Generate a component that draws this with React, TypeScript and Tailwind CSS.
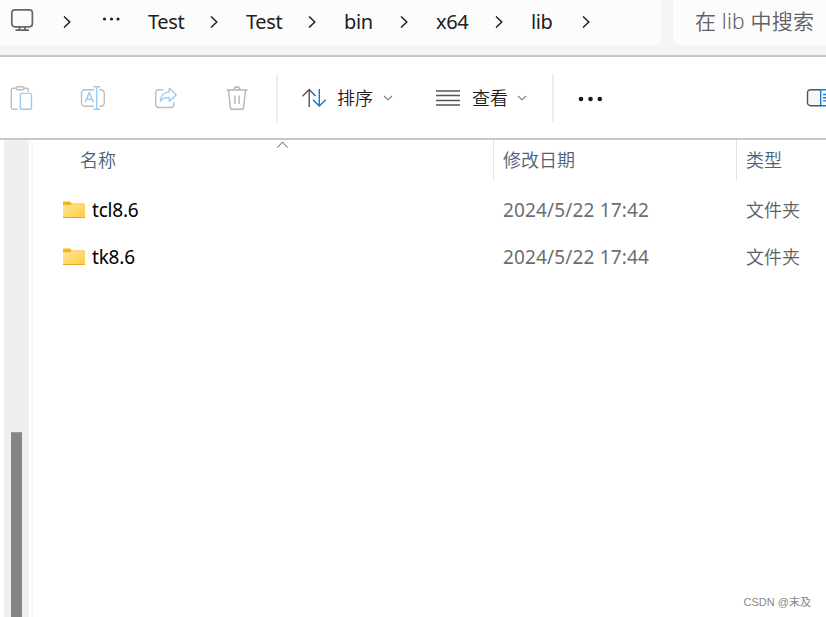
import type { ReactNode } from "react"
import { clsx } from "clsx"

type FileRow = { name: string; modified: string; type: string }

const files: FileRow[] = [
  { name: "tcl8.6", modified: "2024/5/22 17:42", type: "文件夹" },
  { name: "tk8.6", modified: "2024/5/22 17:44", type: "文件夹" },
]

const crumbs = [
  { label: "Test", className: "w-[98px]" },
  { label: "Test", className: "w-[98px]" },
  { label: "bin", className: "w-[92px]" },
  { label: "x64", className: "w-[95px]" },
  { label: "lib", className: "w-[87px]" },
]

function Chevron() {
  return (
    <svg width="8" height="12" viewBox="0 0 8 12" fill="none" stroke="#222" strokeWidth="1.5">
      <path d="M1 .5 6.8 6 1 11.5" />
    </svg>
  )
}

function SmallChevronDown() {
  return (
    <svg width="10" height="6" viewBox="0 0 10 6" fill="none" stroke="#777" strokeWidth="1.1">
      <path d="M1 1 5 4.8 9 1" />
    </svg>
  )
}

function MonitorIcon() {
  return (
    <svg width="24" height="24" viewBox="0 0 24 24" fill="none" stroke="#666" strokeWidth="1.7">
      <rect x="1.8" y="1.8" width="20.6" height="17" rx="3" />
      <path d="M9.5 19v3M15 19v3M5.5 22.2h13.5" />
    </svg>
  )
}

function PasteIcon() {
  return (
    <svg width="24" height="26" viewBox="0 0 24 26" fill="none" stroke="#bdbdbd" strokeWidth="1.4">
      <path d="M7.5 24.3H3a1.7 1.7 0 0 1-1.7-1.7V5A1.7 1.7 0 0 1 3 3.3h3.2M14 3.3h2.7A1.7 1.7 0 0 1 18.4 5v1.8" />
      <rect x="6.2" y="1.7" width="7.8" height="3" rx="1.5" />
      <rect x="10.3" y="8.4" width="11.2" height="15.9" rx="1.8" stroke="#9acdf4" />
    </svg>
  )
}

function RenameIcon() {
  return (
    <svg width="26" height="26" viewBox="0 0 26 26" fill="none" stroke="#bdbdbd" strokeWidth="1.4">
      <path d="M14 21.2H5a3.5 3.5 0 0 1-3.5-3.5V8.3A3.5 3.5 0 0 1 5 4.8h9M19.5 4.8h1.3a3.5 3.5 0 0 1 3.5 3.5v9.4a3.5 3.5 0 0 1-3.5 3.5h-1.3" />
      <path d="M5 17.5 9.2 7.5l4.3 10M6.4 14.2h5.7M16.7 1.7v22.6M13.3 1.7h6.8M13.3 24.3h6.8" stroke="#9acdf4" />
    </svg>
  )
}

function ShareIcon() {
  return (
    <svg width="24" height="26" viewBox="0 0 24 26" fill="none" stroke="#bdbdbd" strokeWidth="1.4" strokeLinejoin="round">
      <path d="M9 4.7H4.7a3 3 0 0 0-3 3v11.8a3 3 0 0 0 3 3h12.2a3 3 0 0 0 3-3v-2.2" />
      <path d="m15.3 3.3 7 6.4-7 6.5v-3.7c-4-.2-6.5.7-9 3.7.3-5 3.3-8.7 9-9.3Z" stroke="#9acdf4" />
    </svg>
  )
}

function TrashIcon() {
  return (
    <svg width="24" height="26" viewBox="0 0 24 26" fill="none" stroke="#b5b5b5" strokeWidth="1.4">
      <path d="M1.5 5h21M3.5 5l1.8 17.3a2 2 0 0 0 2 2h9.4a2 2 0 0 0 2-2L20.5 5M9 5c0-4 6-4 6 0M9.9 10.5v8.5M14.1 10.5v8.5" />
    </svg>
  )
}

function SortIcon() {
  return (
    <svg width="26" height="20" viewBox="0 0 26 20" fill="none" stroke="#555" strokeWidth="1.4">
      <path d="M8.2 19V1.8M1.5 8.3l6.7-6.7 6.3 6.3" />
      <path d="M18.3 1v17M12 11.8l6.3 6.3 6.4-6.3" stroke="#0f7bd4" />
    </svg>
  )
}

function PreviewPaneIcon() {
  return (
    <svg width="20" height="20" viewBox="0 0 20 20" fill="none" strokeWidth="1.4">
      <path d="M14.5 1.7h-10a3 3 0 0 0-3 3v10a3 3 0 0 0 3 3h10" stroke="#555" fill="#f7f7f7" />
      <path d="M20 1.7h-5.3v16H20M17 6.5h3M17 9.7h3M17 12.9h3" stroke="#0f7bd4" />
    </svg>
  )
}

function FolderIcon() {
  return (
    <svg className="-mt-0.5" width="22" height="18" viewBox="0 0 22 18">
      <defs>
        <linearGradient id="folder" x1="0" y1="0" x2="1" y2="1">
          <stop offset="0" stopColor="#ffe79c" />
          <stop offset="1" stopColor="#ffca3c" />
        </linearGradient>
      </defs>
      <path d="M0 1.5Q0 .5 1 .5h6.2l1.6 2H21q1 0 1 1V7H0Z" fill="#f7b51c" />
      <path d="M0 5q0-.7.8-.7h6l1.8-1H22V16q0 1-1 1H1q-1 0-1-1Z" fill="url(#folder)" />
      <path d="M0 16.5h22" stroke="#eaa824" />
    </svg>
  )
}

function Header(props: { children: ReactNode; className?: string }) {
  return (
    <div className={clsx("h-10 shrink-0 pt-[7px] text-[18px] leading-[27px] font-[350] text-[#4c607a]", props.className)}>
      {props.children}
    </div>
  )
}

function AddressBar() {
  return (
    <div className="flex h-[55px] justify-between bg-[#f3f4f4]">
      <nav className="flex h-[45px] w-[661px] items-center rounded-br-md bg-[#fcfcfc] pb-0.5 pl-2.5 text-[20px] tracking-[-0.4px] text-[#202020]">
        <div className="-mt-1 w-[53px]">
          <MonitorIcon />
        </div>
        <div className="w-[39px]">
          <Chevron />
        </div>
        <svg className="-mt-[5px] mr-[28px]" width="18" height="4" viewBox="0 0 18 4" fill="#222">
          <circle cx="2.5" cy="2" r="1.6" />
          <circle cx="9.5" cy="2" r="1.6" />
          <circle cx="16" cy="2" r="1.6" />
        </svg>
        {crumbs.map((crumb, i) => (
          <div key={i} className={clsx("flex shrink-0 items-center justify-between", crumb.className)}>
            <span>{crumb.label}</span>
            <span className="mr-7">
              <Chevron />
            </span>
          </div>
        ))}
      </nav>
      <div className="h-[45px] w-[153px] whitespace-nowrap rounded-bl-md bg-[#fcfcfc] pl-[22px] pt-1.5 text-[21px] leading-[30px] font-[350] tracking-[0.2px] text-[#606060]">
        在 lib 中搜索
      </div>
    </div>
  )
}

function Toolbar() {
  return (
    <div className="flex h-[85px] items-center overflow-hidden border-y-2 border-[#c4c8c8] bg-white pl-[10px] text-[18px] text-[#1c1c1c]">
      <button className="w-[70px]">
        <PasteIcon />
      </button>
      <button className="w-[74px]">
        <RenameIcon />
      </button>
      <button className="w-[71px]">
        <ShareIcon />
      </button>
      <button className="w-[51px]">
        <TrashIcon />
      </button>
      <div className="mr-[23px] h-12 w-0.5 bg-[#eee]" />
      <button className="flex items-center">
        <SortIcon />
        <span className="ml-[10px] mr-[10px] pt-0.5 font-[350]">排序</span>
        <SmallChevronDown />
      </button>
      <button className="ml-[43px] flex items-center">
        <svg width="24" height="18" viewBox="0 0 24 18" stroke="#555" strokeWidth="1.3">
          <path d="M0 2h24M0 6.5h24M0 11.5h24M0 16h24" />
        </svg>
        <span className="ml-[12px] mr-[9px] pt-0.5 font-[350]">查看</span>
        <SmallChevronDown />
      </button>
      <div className="ml-[25px] mr-[24px] h-12 w-0.5 bg-[#eee]" />
      <svg className="mt-0.5" width="26" height="6" viewBox="0 0 26 6" fill="#1a1a1a">
        <circle cx="3" cy="3" r="2.3" />
        <circle cx="12.5" cy="3" r="2.3" />
        <circle cx="21.8" cy="3" r="2.3" />
      </svg>
      <button className="ml-auto">
        <PreviewPaneIcon />
      </button>
    </div>
  )
}

export default function App() {
  return (
    <div className="flex h-[617px] w-[826px] flex-col overflow-hidden bg-white font-['Noto_Sans','Noto_Sans_CJK_SC',sans-serif]">
      <AddressBar />
      <Toolbar />
      <div className="flex min-h-0 flex-1">
        {/* navigation scrollbar */}
        <div className="ml-1 flex w-[25px] items-end bg-[#efefef] pl-[7px]">
          <div className="h-[185px] w-[11px] border-t border-[#999] bg-[#858585]" />
        </div>
        <div className="ml-0.5 w-0.5 bg-[#f7f7f7]" />
        <main className="relative flex flex-1 flex-col">
          <div className="flex">
            <Header className="w-[460px] pl-[47px]">名称</Header>
            <Header className="w-[243px] border-l border-[#e2e2e2] pl-[9px]">修改日期</Header>
            <Header className="flex-1 border-l border-[#e2e2e2] pl-[9px]">类型</Header>
          </div>
          <svg className="absolute left-[244px] top-px" width="11" height="7" viewBox="0 0 11 7" fill="none" stroke="#555">
            <path d="M.5 6.5 5.5 1l5 5.5" />
          </svg>
          <div className="pt-[7px]">
            {files.map((file) => (
              <div key={file.name} className="flex h-[47px] items-center whitespace-nowrap">
                <div className="flex w-[470px] items-center gap-[7px] pl-[30px] text-[19px] tracking-[-0.2px] text-black">
                  <FolderIcon />
                  <span>{file.name}</span>
                </div>
                <div className="w-[243px] text-[19px] tracking-[0.15px] text-[#6e6e6e]">{file.modified}</div>
                <div className="text-[18px] font-[350] text-[#606060]">{file.type}</div>
              </div>
            ))}
          </div>
          <div className="mb-[6px] mr-[15px] mt-auto self-end font-['Liberation_Sans','Noto_Sans_CJK_SC',sans-serif] text-[11px] leading-[18px] text-[#888]">
            CSDN @末及
          </div>
        </main>
      </div>
    </div>
  )
}
